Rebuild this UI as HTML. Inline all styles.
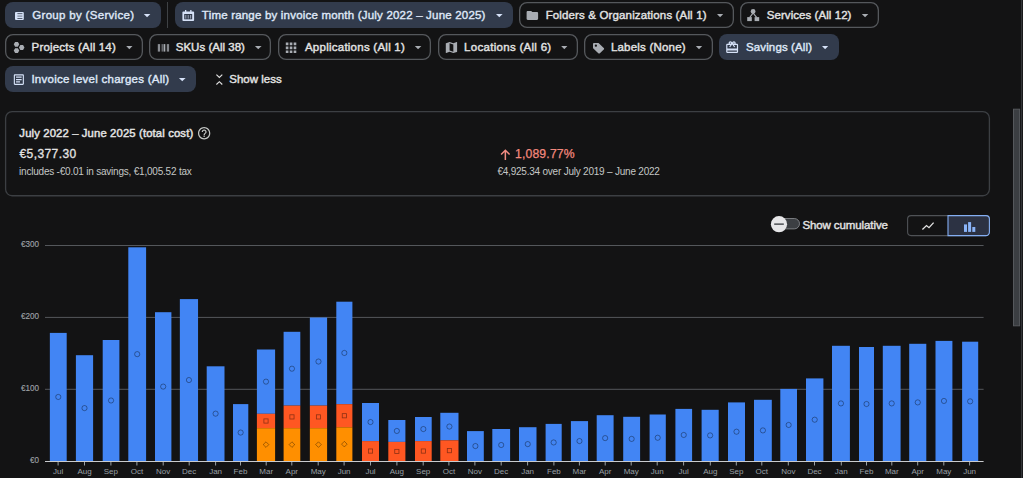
<!DOCTYPE html>
<html><head><meta charset="utf-8"><title>Billing report</title>
<style>
html,body{margin:0;padding:0;}
body{width:1023px;height:478px;overflow:hidden;background:#131314;position:relative;font-family:"Liberation Sans",sans-serif;}
.chip{position:absolute;box-sizing:border-box;height:26px;border-radius:8px;}
.f{background:#323b4c;}
.o{}
.t{position:absolute;white-space:nowrap;line-height:20px;}
svg{position:absolute;left:0;top:0;}
</style></head><body>
<div class="chip f" style="left:5px;top:2px;width:156px"></div>
<div class="chip f" style="left:175px;top:2px;width:338px"></div>
<div class="chip o" style="left:519px;top:2px;width:215px"></div>
<div class="chip o" style="left:740px;top:2px;width:139px"></div>
<div class="chip o" style="left:5px;top:34px;width:138px"></div>
<div class="chip o" style="left:149px;top:34px;width:122px"></div>
<div class="chip o" style="left:278px;top:34px;width:153px"></div>
<div class="chip o" style="left:438px;top:34px;width:140px"></div>
<div class="chip o" style="left:584px;top:34px;width:129px"></div>
<div class="chip f" style="left:719px;top:34px;width:120px"></div>
<div class="chip f" style="left:5px;top:66px;width:191px"></div>
<div style="position:absolute;left:167px;top:2px;width:1px;height:26px;background:#3f4245"></div>
<div style="position:absolute;left:5px;top:111px;width:985px;height:85px;border-radius:7px"></div>
<div class="t" style="left:32.23px;top:5.00px;font-size:11.5px;font-weight:400;color:#dfe7f7;letter-spacing:0.316px;-webkit-text-stroke:0.4px #dfe7f7">Group by (Service)</div>
<div class="t" style="left:201.86px;top:5.00px;font-size:11.5px;font-weight:400;color:#dfe7f7;letter-spacing:0.195px;-webkit-text-stroke:0.4px #dfe7f7">Time range by invoice month (July 2022 – June 2025)</div>
<div class="t" style="left:545.63px;top:5.00px;font-size:11.5px;font-weight:400;color:#e3e3e3;letter-spacing:0.143px;-webkit-text-stroke:0.4px #e3e3e3">Folders &amp; Organizations (All 1)</div>
<div class="t" style="left:766.81px;top:5.00px;font-size:11.5px;font-weight:400;color:#e3e3e3;letter-spacing:0.057px;-webkit-text-stroke:0.4px #e3e3e3">Services (All 12)</div>
<div class="t" style="left:31.53px;top:37.00px;font-size:11.5px;font-weight:400;color:#e3e3e3;letter-spacing:0.194px;-webkit-text-stroke:0.4px #e3e3e3">Projects (All 14)</div>
<div class="t" style="left:175.71px;top:37.00px;font-size:11.5px;font-weight:400;color:#e3e3e3;letter-spacing:0.019px;-webkit-text-stroke:0.4px #e3e3e3">SKUs (All 38)</div>
<div class="t" style="left:304.95px;top:37.00px;font-size:11.5px;font-weight:400;color:#e3e3e3;letter-spacing:0.246px;-webkit-text-stroke:0.4px #e3e3e3">Applications (All 1)</div>
<div class="t" style="left:464.11px;top:37.00px;font-size:11.5px;font-weight:400;color:#e3e3e3;letter-spacing:0.288px;-webkit-text-stroke:0.4px #e3e3e3">Locations (All 6)</div>
<div class="t" style="left:610.91px;top:37.00px;font-size:11.5px;font-weight:400;color:#e3e3e3;letter-spacing:0.209px;-webkit-text-stroke:0.4px #e3e3e3">Labels (None)</div>
<div class="t" style="left:746.01px;top:37.00px;font-size:11.5px;font-weight:400;color:#dfe7f7;letter-spacing:0.125px;-webkit-text-stroke:0.4px #dfe7f7">Savings (All)</div>
<div class="t" style="left:31.39px;top:69.00px;font-size:11.5px;font-weight:400;color:#dfe7f7;letter-spacing:0.259px;-webkit-text-stroke:0.4px #dfe7f7">Invoice level charges (All)</div>
<div class="t" style="left:229.21px;top:69.00px;font-size:11.5px;font-weight:400;color:#e3e3e3;letter-spacing:0.006px;-webkit-text-stroke:0.4px #e3e3e3">Show less</div>
<div class="t" style="left:19.37px;top:122.80px;font-size:11.3px;font-weight:400;color:#e3e3e3;letter-spacing:0.129px;-webkit-text-stroke:0.45px #e3e3e3">July 2022 – June 2025 (total cost)</div>
<div class="t" style="left:19.48px;top:144.00px;font-size:12px;font-weight:400;color:#e3e3e3;letter-spacing:0.413px;-webkit-text-stroke:0.3px #e3e3e3">€5,377.30</div>
<div class="t" style="left:19.06px;top:161.70px;font-size:10px;font-weight:400;color:#c4c7c5;letter-spacing:-0.212px;-webkit-text-stroke:0px #c4c7c5">includes -€0.01 in savings, €1,005.52 tax</div>
<div class="t" style="left:514.93px;top:144.00px;font-size:12.2px;font-weight:400;color:#f2887d;letter-spacing:0.179px;-webkit-text-stroke:0.25px #f2887d">1,089.77%</div>
<div class="t" style="left:497.44px;top:161.70px;font-size:10px;font-weight:400;color:#c4c7c5;letter-spacing:-0.220px;-webkit-text-stroke:0px #c4c7c5">€4,925.34 over July 2019 – June 2022</div>
<div class="t" style="left:802.41px;top:215.00px;font-size:11.5px;font-weight:400;color:#e3e3e3;letter-spacing:-0.101px;-webkit-text-stroke:0.4px #e3e3e3">Show cumulative</div>
<svg width="1023" height="478" viewBox="0 0 1023 478"><path d="M143.80 13.95L150.40 13.95L147.10 17.25Z" fill="#d6e2f8"/><path d="M496.00 13.95L502.60 13.95L499.30 17.25Z" fill="#d6e2f8"/><path d="M717.00 14.05L723.20 14.05L720.10 17.15Z" fill="#a9adb3"/><path d="M861.80 13.97L868.30 13.97L865.05 17.23Z" fill="#a9adb3"/><path d="M126.20 46.02L132.50 46.02L129.35 49.17Z" fill="#a9adb3"/><path d="M254.90 45.93L261.60 45.93L258.25 49.27Z" fill="#a9adb3"/><path d="M414.80 45.95L421.40 45.95L418.10 49.25Z" fill="#a9adb3"/><path d="M561.20 46.05L567.40 46.05L564.30 49.15Z" fill="#a9adb3"/><path d="M695.80 46.00L702.20 46.00L699.00 49.20Z" fill="#a9adb3"/><path d="M822.00 46.05L828.20 46.05L825.10 49.15Z" fill="#d6e2f8"/><path d="M178.90 77.92L185.60 77.92L182.25 81.27Z" fill="#d6e2f8"/><rect x="519.65" y="2.65" width="213.70" height="24.7" rx="7.4" fill="none" stroke="#55585c" stroke-width="1.3"/><rect x="740.65" y="2.65" width="137.70" height="24.7" rx="7.4" fill="none" stroke="#55585c" stroke-width="1.3"/><rect x="5.65" y="34.65" width="136.70" height="24.7" rx="7.4" fill="none" stroke="#55585c" stroke-width="1.3"/><rect x="149.65" y="34.65" width="120.70" height="24.7" rx="7.4" fill="none" stroke="#55585c" stroke-width="1.3"/><rect x="278.65" y="34.65" width="151.70" height="24.7" rx="7.4" fill="none" stroke="#55585c" stroke-width="1.3"/><rect x="438.65" y="34.65" width="138.70" height="24.7" rx="7.4" fill="none" stroke="#55585c" stroke-width="1.3"/><rect x="584.65" y="34.65" width="127.70" height="24.7" rx="7.4" fill="none" stroke="#55585c" stroke-width="1.3"/><rect x="15" y="11.9" width="8.8" height="8.1" rx="1" fill="#d6e2f8"/><rect x="17.4" y="13.3" width="5" height="0.8" fill="#323b4c"/><rect x="17.4" y="15.5" width="5" height="1.2" fill="#7d8698"/><rect x="17.4" y="18.1" width="5" height="0.8" fill="#323b4c"/><rect x="182.4" y="11.6" width="11.7" height="9.5" rx="1" fill="#d6e2f8"/><rect x="185" y="10" width="1.3" height="2" fill="#d6e2f8"/><rect x="190.2" y="10" width="1.3" height="2" fill="#d6e2f8"/><rect x="184.2" y="14" width="8" height="5.3" fill="#323b4c"/><rect x="185.3" y="15" width="1" height="3.6" fill="#9aa3b5"/><rect x="187.7" y="15" width="1" height="3.6" fill="#9aa3b5"/><rect x="190.1" y="15" width="1" height="3.6" fill="#9aa3b5"/><path transform="translate(525.450 8.650) scale(0.5750 0.5625)" d="M10 4H4c-1.1 0-1.99.9-1.99 2L2 18c0 1.1.9 2 2 2h16c1.1 0 2-.9 2-2V8c0-1.1-.9-2-2-2h-8l-2-2z" fill="#a9adb3"/><circle cx="753.1" cy="11.4" r="2.4" fill="#a9adb3"/><rect x="747.2" y="17.1" width="4.6" height="4" fill="#a9adb3"/><rect x="754.6" y="17.1" width="4.6" height="4" fill="#a9adb3"/><path d="M753.1 13L749.8 17.4M753.1 13L756.6 17.4" stroke="#a9adb3" stroke-width="1.2" fill="none"/><polygon points="19.25,44.30 17.88,46.68 15.12,46.68 13.75,44.30 15.12,41.92 17.88,41.92" fill="#a9adb3"/><polygon points="19.25,50.60 17.88,52.98 15.12,52.98 13.75,50.60 15.12,48.22 17.88,48.22" fill="#a9adb3"/><polygon points="24.45,47.50 23.07,49.88 20.32,49.88 18.95,47.50 20.32,45.12 23.07,45.12" fill="#a9adb3"/><rect x="157.8" y="44.1" width="2.30" height="7.5" fill="#a9adb3" opacity="0.8"/><rect x="161.5" y="44.1" width="1.70" height="7.5" fill="#a9adb3" opacity="0.55"/><rect x="163.6" y="44.1" width="1.70" height="7.5" fill="#a9adb3" opacity="1.0"/><rect x="166.8" y="44.1" width="2.30" height="7.5" fill="#a9adb3" opacity="0.75"/><path transform="translate(283.175 39.975) scale(0.6562 0.6562)" d="M4 8h4V4H4v4zm6 12h4v-4h-4v4zm-6 0h4v-4H4v4zm0-6h4v-4H4v4zm6 0h4v-4h-4v4zm6-10v4h4V4h-4zm-6 4h4V4h-4v4zm6 6h4v-4h-4v4zm0 6h4v-4h-4v4z" fill="#a9adb3"/><path transform="translate(443.917 40.150) scale(0.6278 0.6167)" d="M20.5 3l-.16.03L15 5.1 9 3 3.36 4.9c-.21.07-.36.25-.36.48V20.5c0 .28.22.5.5.5l.16-.03L9 18.9l6 2.1 5.64-1.9c.21-.07.36-.25.36-.48V3.5c0-.28-.22-.5-.5-.5zM15 19l-6-2.11V5l6 2.11V19z" fill="#a9adb3"/><path transform="translate(591.890 41.830) scale(0.5550 0.5350)" d="M21.41 11.58l-9-9C12.05 2.22 11.55 2 11 2H4c-1.1 0-2 .9-2 2v7c0 .55.22 1.05.59 1.42l9 9c.36.36.86.58 1.41.58.55 0 1.05-.22 1.41-.59l7-7c.37-.36.59-.86.59-1.41 0-.55-.23-1.06-.59-1.42z" fill="#a9adb3"/><circle cx="595.9" cy="45.7" r="1.15" fill="#131314"/><path transform="translate(725.010 39.968) scale(0.5950 0.6158)" d="M20 6h-2.18c.11-.31.18-.65.18-1 0-1.66-1.34-3-3-3-1.05 0-1.96.54-2.5 1.35l-.5.67-.5-.68C10.96 2.54 10.05 2 9 2 7.34 2 6 3.34 6 5c0 .35.07.69.18 1H4c-1.11 0-1.99.89-1.99 2L2 19c0 1.11.89 2 2 2h16c1.11 0 2-.89 2-2V8c0-1.11-.89-2-2-2zm-5-2c.55 0 1 .45 1 1s-.45 1-1 1-1-.45-1-1 .45-1 1-1zM9 4c.55 0 1 .45 1 1s-.45 1-1 1-1-.45-1-1 .45-1 1-1zm11 15H4v-2h16v2zm0-5H4V8h5.08L7 10.83 8.62 12 11 8.76l1-1.36 1 1.36L15.38 12 17 10.83 14.92 8H20v6z" fill="#d6e2f8"/><path transform="translate(12.117 72.417) scale(0.5611 0.5944)" d="M19 5v14H5V5h14m0-2H5c-1.1 0-2 .9-2 2v14c0 1.1.9 2 2 2h14c1.1 0 2-.9 2-2V5c0-1.1-.9-2-2-2z M14 17H7v-2h7v2zm3-4H7v-2h10v2zm0-4H7V7h10v2z" fill="#d6e2f8"/><path d="M216.4 74.6L219.35 77.4L222.3 74.6M216.4 84.5L219.35 81.7L222.3 84.5" fill="none" stroke="#e3e3e3" stroke-width="1.15"/><path transform="translate(196.770 125.860) scale(0.6150 0.6200)" d="M11 18h2v-2h-2v2zm1-16C6.48 2 2 6.48 2 12s4.48 10 10 10 10-4.48 10-10S17.52 2 12 2zm0 18c-4.41 0-8-3.59-8-8s3.59-8 8-8 8 3.59 8 8-3.59 8-8 8zm0-14c-2.21 0-4 1.79-4 4h2c0-1.1.9-2 2-2s2 .9 2 2c0 2-3 1.75-3 5h2c0-2.25 3-2.5 3-5 0-2.21-1.79-4-4-4z" fill="#c4c7c5"/><path d="M505.35 150.4V160.1M501.1 154.5L505.35 150.2L509.6 154.5" fill="none" stroke="#f28b82" stroke-width="1.5"/><rect x="5.6" y="111.65" width="983.8" height="84.1" rx="6.5" fill="none" stroke="#3c3f43" stroke-width="1.3"/><rect x="771.5" y="218.5" width="28" height="10.4" rx="5.2" fill="#3c3f43" stroke="#8e9196" stroke-width="0.8"/><circle cx="779" cy="224.2" r="8.1" fill="#e6e6e8"/><rect x="774.2" y="223.3" width="9.6" height="1.7" fill="#5d6064"/><rect x="907.6" y="215.6" width="81.8" height="20" rx="3.5" fill="none" stroke="#4f5256" stroke-width="1.1"/><path d="M948 215.6H985.9a3.5 3.5 0 0 1 3.5 3.5V232.1a3.5 3.5 0 0 1 -3.5 3.5H948Z" fill="#2c3243" stroke="#84aef2" stroke-width="1.1"/><path d="M922.4 229.5L926.5 225.6L929 227.7L933.6 222.6" stroke="#e3e3e3" stroke-width="1.3" fill="none"/><rect x="964" y="224.4" width="3" height="7.5" fill="#8ab4f8"/><rect x="968.1" y="222.1" width="3" height="9.8" fill="#8ab4f8"/><rect x="972.3" y="227" width="3" height="4.9" fill="#8ab4f8"/><line x1="45" y1="245.5" x2="983.6" y2="245.5" stroke="#54575b" stroke-width="1"/><line x1="45" y1="317.4" x2="983.6" y2="317.4" stroke="#54575b" stroke-width="1"/><line x1="45" y1="389.3" x2="983.6" y2="389.3" stroke="#54575b" stroke-width="1"/><rect x="49.85" y="332.9" width="16.85" height="128.10" fill="#4285f4"/><circle cx="58.28" cy="396.95" r="2.6" fill="none" stroke="rgba(0,0,0,0.45)" stroke-width="0.8"/><rect x="75.90" y="355.2" width="17.20" height="105.80" fill="#4285f4"/><circle cx="84.50" cy="408.10" r="2.6" fill="none" stroke="rgba(0,0,0,0.45)" stroke-width="0.8"/><rect x="102.70" y="340" width="16.70" height="121.00" fill="#4285f4"/><circle cx="111.05" cy="400.50" r="2.6" fill="none" stroke="rgba(0,0,0,0.45)" stroke-width="0.8"/><rect x="128.30" y="247.3" width="17.80" height="213.70" fill="#4285f4"/><circle cx="137.20" cy="354.15" r="2.6" fill="none" stroke="rgba(0,0,0,0.45)" stroke-width="0.8"/><rect x="155.00" y="312.2" width="16.40" height="148.80" fill="#4285f4"/><circle cx="163.20" cy="386.60" r="2.6" fill="none" stroke="rgba(0,0,0,0.45)" stroke-width="0.8"/><rect x="179.85" y="299.1" width="18.20" height="161.90" fill="#4285f4"/><circle cx="188.95" cy="380.05" r="2.6" fill="none" stroke="rgba(0,0,0,0.45)" stroke-width="0.8"/><rect x="206.70" y="366.3" width="17.80" height="94.70" fill="#4285f4"/><circle cx="215.60" cy="413.65" r="2.6" fill="none" stroke="rgba(0,0,0,0.45)" stroke-width="0.8"/><rect x="233.00" y="404.1" width="15.30" height="56.90" fill="#4285f4"/><circle cx="240.65" cy="432.55" r="2.6" fill="none" stroke="rgba(0,0,0,0.45)" stroke-width="0.8"/><rect x="256.90" y="349.5" width="18.20" height="64.30" fill="#4285f4"/><circle cx="266.00" cy="381.65" r="2.6" fill="none" stroke="rgba(0,0,0,0.45)" stroke-width="0.8"/><rect x="256.90" y="413.8" width="18.20" height="14.40" fill="#ff5722"/><rect x="263.90" y="418.90" width="4.2" height="4.2" fill="none" stroke="rgba(0,0,0,0.45)" stroke-width="0.8"/><rect x="256.90" y="428.2" width="18.20" height="32.80" fill="#ff8f00"/><path d="M266.00 441.80L268.80 444.60L266.00 447.40L263.20 444.60Z" fill="none" stroke="rgba(0,0,0,0.45)" stroke-width="0.8"/><rect x="283.60" y="331.8" width="16.70" height="73.80" fill="#4285f4"/><circle cx="291.95" cy="368.70" r="2.6" fill="none" stroke="rgba(0,0,0,0.45)" stroke-width="0.8"/><rect x="283.60" y="405.6" width="16.70" height="22.60" fill="#ff5722"/><rect x="289.85" y="414.80" width="4.2" height="4.2" fill="none" stroke="rgba(0,0,0,0.45)" stroke-width="0.8"/><rect x="283.60" y="428.2" width="16.70" height="32.80" fill="#ff8f00"/><path d="M291.95 441.80L294.75 444.60L291.95 447.40L289.15 444.60Z" fill="none" stroke="rgba(0,0,0,0.45)" stroke-width="0.8"/><rect x="309.85" y="317.5" width="17.25" height="88.10" fill="#4285f4"/><circle cx="318.48" cy="361.55" r="2.6" fill="none" stroke="rgba(0,0,0,0.45)" stroke-width="0.8"/><rect x="309.85" y="405.6" width="17.25" height="22.60" fill="#ff5722"/><rect x="316.38" y="414.80" width="4.2" height="4.2" fill="none" stroke="rgba(0,0,0,0.45)" stroke-width="0.8"/><rect x="309.85" y="428.2" width="17.25" height="32.80" fill="#ff8f00"/><path d="M318.48 441.80L321.28 444.60L318.48 447.40L315.68 444.60Z" fill="none" stroke="rgba(0,0,0,0.45)" stroke-width="0.8"/><rect x="336.30" y="301.7" width="16.10" height="102.50" fill="#4285f4"/><circle cx="344.35" cy="352.95" r="2.6" fill="none" stroke="rgba(0,0,0,0.45)" stroke-width="0.8"/><rect x="336.30" y="404.2" width="16.10" height="23.10" fill="#ff5722"/><rect x="342.25" y="413.65" width="4.2" height="4.2" fill="none" stroke="rgba(0,0,0,0.45)" stroke-width="0.8"/><rect x="336.30" y="427.3" width="16.10" height="33.70" fill="#ff8f00"/><path d="M344.35 441.35L347.15 444.15L344.35 446.95L341.55 444.15Z" fill="none" stroke="rgba(0,0,0,0.45)" stroke-width="0.8"/><rect x="362.00" y="403" width="17.00" height="38.10" fill="#4285f4"/><circle cx="370.50" cy="422.05" r="2.6" fill="none" stroke="rgba(0,0,0,0.45)" stroke-width="0.8"/><rect x="362.00" y="441.1" width="17.00" height="19.90" fill="#ff5722"/><rect x="368.40" y="448.95" width="4.2" height="4.2" fill="none" stroke="rgba(0,0,0,0.45)" stroke-width="0.8"/><rect x="388.30" y="420" width="17.10" height="21.90" fill="#4285f4"/><circle cx="396.85" cy="430.95" r="2.6" fill="none" stroke="rgba(0,0,0,0.45)" stroke-width="0.8"/><rect x="388.30" y="441.9" width="17.10" height="19.10" fill="#ff5722"/><rect x="394.75" y="449.35" width="4.2" height="4.2" fill="none" stroke="rgba(0,0,0,0.45)" stroke-width="0.8"/><rect x="415.00" y="417" width="16.70" height="24.10" fill="#4285f4"/><circle cx="423.35" cy="429.05" r="2.6" fill="none" stroke="rgba(0,0,0,0.45)" stroke-width="0.8"/><rect x="415.00" y="441.1" width="16.70" height="19.90" fill="#ff5722"/><rect x="421.25" y="448.95" width="4.2" height="4.2" fill="none" stroke="rgba(0,0,0,0.45)" stroke-width="0.8"/><rect x="440.30" y="412.8" width="18.20" height="27.50" fill="#4285f4"/><circle cx="449.40" cy="426.55" r="2.6" fill="none" stroke="rgba(0,0,0,0.45)" stroke-width="0.8"/><rect x="440.30" y="440.3" width="18.20" height="20.70" fill="#ff5722"/><rect x="447.30" y="448.55" width="4.2" height="4.2" fill="none" stroke="rgba(0,0,0,0.45)" stroke-width="0.8"/><rect x="467.00" y="431.1" width="16.80" height="29.90" fill="#4285f4"/><circle cx="475.40" cy="446.05" r="2.6" fill="none" stroke="rgba(0,0,0,0.45)" stroke-width="0.8"/><rect x="492.30" y="429" width="17.80" height="32.00" fill="#4285f4"/><circle cx="501.20" cy="445.00" r="2.6" fill="none" stroke="rgba(0,0,0,0.45)" stroke-width="0.8"/><rect x="519.00" y="427.2" width="17.50" height="33.80" fill="#4285f4"/><circle cx="527.75" cy="444.10" r="2.6" fill="none" stroke="rgba(0,0,0,0.45)" stroke-width="0.8"/><rect x="545.60" y="423.9" width="16.10" height="37.10" fill="#4285f4"/><circle cx="553.65" cy="442.45" r="2.6" fill="none" stroke="rgba(0,0,0,0.45)" stroke-width="0.8"/><rect x="570.90" y="421.1" width="17.15" height="39.90" fill="#4285f4"/><circle cx="579.47" cy="441.05" r="2.6" fill="none" stroke="rgba(0,0,0,0.45)" stroke-width="0.8"/><rect x="596.70" y="415.2" width="16.90" height="45.80" fill="#4285f4"/><circle cx="605.15" cy="438.10" r="2.6" fill="none" stroke="rgba(0,0,0,0.45)" stroke-width="0.8"/><rect x="623.20" y="416.8" width="16.90" height="44.20" fill="#4285f4"/><circle cx="631.65" cy="438.90" r="2.6" fill="none" stroke="rgba(0,0,0,0.45)" stroke-width="0.8"/><rect x="649.60" y="414.5" width="16.20" height="46.50" fill="#4285f4"/><circle cx="657.70" cy="437.75" r="2.6" fill="none" stroke="rgba(0,0,0,0.45)" stroke-width="0.8"/><rect x="675.40" y="408.9" width="16.70" height="52.10" fill="#4285f4"/><circle cx="683.75" cy="434.95" r="2.6" fill="none" stroke="rgba(0,0,0,0.45)" stroke-width="0.8"/><rect x="701.60" y="409.8" width="17.10" height="51.20" fill="#4285f4"/><circle cx="710.15" cy="435.40" r="2.6" fill="none" stroke="rgba(0,0,0,0.45)" stroke-width="0.8"/><rect x="728.00" y="402.4" width="17.00" height="58.60" fill="#4285f4"/><circle cx="736.50" cy="431.70" r="2.6" fill="none" stroke="rgba(0,0,0,0.45)" stroke-width="0.8"/><rect x="754.00" y="399.8" width="17.80" height="61.20" fill="#4285f4"/><circle cx="762.90" cy="430.40" r="2.6" fill="none" stroke="rgba(0,0,0,0.45)" stroke-width="0.8"/><rect x="780.30" y="388.9" width="16.70" height="72.10" fill="#4285f4"/><circle cx="788.65" cy="424.95" r="2.6" fill="none" stroke="rgba(0,0,0,0.45)" stroke-width="0.8"/><rect x="806.00" y="378.4" width="17.40" height="82.60" fill="#4285f4"/><circle cx="814.70" cy="419.70" r="2.6" fill="none" stroke="rgba(0,0,0,0.45)" stroke-width="0.8"/><rect x="832.00" y="345.8" width="17.90" height="115.20" fill="#4285f4"/><circle cx="840.95" cy="403.40" r="2.6" fill="none" stroke="rgba(0,0,0,0.45)" stroke-width="0.8"/><rect x="859.00" y="347" width="15.00" height="114.00" fill="#4285f4"/><circle cx="866.50" cy="404.00" r="2.6" fill="none" stroke="rgba(0,0,0,0.45)" stroke-width="0.8"/><rect x="882.80" y="345.8" width="17.80" height="115.20" fill="#4285f4"/><circle cx="891.70" cy="403.40" r="2.6" fill="none" stroke="rgba(0,0,0,0.45)" stroke-width="0.8"/><rect x="909.20" y="343.8" width="17.10" height="117.20" fill="#4285f4"/><circle cx="917.75" cy="402.40" r="2.6" fill="none" stroke="rgba(0,0,0,0.45)" stroke-width="0.8"/><rect x="935.50" y="340.9" width="16.90" height="120.10" fill="#4285f4"/><circle cx="943.95" cy="400.95" r="2.6" fill="none" stroke="rgba(0,0,0,0.45)" stroke-width="0.8"/><rect x="962.10" y="341.7" width="16.10" height="119.30" fill="#4285f4"/><circle cx="970.15" cy="401.35" r="2.6" fill="none" stroke="rgba(0,0,0,0.45)" stroke-width="0.8"/><line x1="45" y1="461.5" x2="983.6" y2="461.5" stroke="#c9cbce" stroke-width="1"/><line x1="58.10" y1="462" x2="58.10" y2="465.5" stroke="#9aa0a6" stroke-width="1"/><line x1="84.50" y1="462" x2="84.50" y2="465.5" stroke="#9aa0a6" stroke-width="1"/><line x1="110.90" y1="462" x2="110.90" y2="465.5" stroke="#9aa0a6" stroke-width="1"/><line x1="136.90" y1="462" x2="136.90" y2="465.5" stroke="#9aa0a6" stroke-width="1"/><line x1="163.20" y1="462" x2="163.20" y2="465.5" stroke="#9aa0a6" stroke-width="1"/><line x1="189.20" y1="462" x2="189.20" y2="465.5" stroke="#9aa0a6" stroke-width="1"/><line x1="215.60" y1="462" x2="215.60" y2="465.5" stroke="#9aa0a6" stroke-width="1"/><line x1="240.50" y1="462" x2="240.50" y2="465.5" stroke="#9aa0a6" stroke-width="1"/><line x1="266.20" y1="462" x2="266.20" y2="465.5" stroke="#9aa0a6" stroke-width="1"/><line x1="291.80" y1="462" x2="291.80" y2="465.5" stroke="#9aa0a6" stroke-width="1"/><line x1="318.20" y1="462" x2="318.20" y2="465.5" stroke="#9aa0a6" stroke-width="1"/><line x1="344.10" y1="462" x2="344.10" y2="465.5" stroke="#9aa0a6" stroke-width="1"/><line x1="370.50" y1="462" x2="370.50" y2="465.5" stroke="#9aa0a6" stroke-width="1"/><line x1="396.90" y1="462" x2="396.90" y2="465.5" stroke="#9aa0a6" stroke-width="1"/><line x1="423.20" y1="462" x2="423.20" y2="465.5" stroke="#9aa0a6" stroke-width="1"/><line x1="448.90" y1="462" x2="448.90" y2="465.5" stroke="#9aa0a6" stroke-width="1"/><line x1="474.90" y1="462" x2="474.90" y2="465.5" stroke="#9aa0a6" stroke-width="1"/><line x1="501.20" y1="462" x2="501.20" y2="465.5" stroke="#9aa0a6" stroke-width="1"/><line x1="527.60" y1="462" x2="527.60" y2="465.5" stroke="#9aa0a6" stroke-width="1"/><line x1="553.90" y1="462" x2="553.90" y2="465.5" stroke="#9aa0a6" stroke-width="1"/><line x1="579.40" y1="462" x2="579.40" y2="465.5" stroke="#9aa0a6" stroke-width="1"/><line x1="605.20" y1="462" x2="605.20" y2="465.5" stroke="#9aa0a6" stroke-width="1"/><line x1="631.20" y1="462" x2="631.20" y2="465.5" stroke="#9aa0a6" stroke-width="1"/><line x1="657.20" y1="462" x2="657.20" y2="465.5" stroke="#9aa0a6" stroke-width="1"/><line x1="683.60" y1="462" x2="683.60" y2="465.5" stroke="#9aa0a6" stroke-width="1"/><line x1="710.30" y1="462" x2="710.30" y2="465.5" stroke="#9aa0a6" stroke-width="1"/><line x1="736.30" y1="462" x2="736.30" y2="465.5" stroke="#9aa0a6" stroke-width="1"/><line x1="761.80" y1="462" x2="761.80" y2="465.5" stroke="#9aa0a6" stroke-width="1"/><line x1="788.30" y1="462" x2="788.30" y2="465.5" stroke="#9aa0a6" stroke-width="1"/><line x1="814.50" y1="462" x2="814.50" y2="465.5" stroke="#9aa0a6" stroke-width="1"/><line x1="841.30" y1="462" x2="841.30" y2="465.5" stroke="#9aa0a6" stroke-width="1"/><line x1="866.50" y1="462" x2="866.50" y2="465.5" stroke="#9aa0a6" stroke-width="1"/><line x1="891.80" y1="462" x2="891.80" y2="465.5" stroke="#9aa0a6" stroke-width="1"/><line x1="917.70" y1="462" x2="917.70" y2="465.5" stroke="#9aa0a6" stroke-width="1"/><line x1="943.80" y1="462" x2="943.80" y2="465.5" stroke="#9aa0a6" stroke-width="1"/><line x1="969.60" y1="462" x2="969.60" y2="465.5" stroke="#9aa0a6" stroke-width="1"/><text x="20.90" y="247.2" textLength="18.0" lengthAdjust="spacingAndGlyphs" font-family="Liberation Sans" font-size="8.8" fill="#9ea2a7" stroke="#9ea2a7" stroke-width="0.15">€300</text><text x="20.90" y="319.1" textLength="18.0" lengthAdjust="spacingAndGlyphs" font-family="Liberation Sans" font-size="8.8" fill="#9ea2a7" stroke="#9ea2a7" stroke-width="0.15">€200</text><text x="20.90" y="391.0" textLength="18.0" lengthAdjust="spacingAndGlyphs" font-family="Liberation Sans" font-size="8.8" fill="#9ea2a7" stroke="#9ea2a7" stroke-width="0.15">€100</text><text x="29.90" y="462.7" textLength="9.0" lengthAdjust="spacingAndGlyphs" font-family="Liberation Sans" font-size="8.8" fill="#9ea2a7" stroke="#9ea2a7" stroke-width="0.15">€0</text><text x="58.10" y="473.6" text-anchor="middle" font-family="Liberation Sans" font-size="8" fill="#9aa0a6">Jul</text><text x="84.50" y="473.6" text-anchor="middle" font-family="Liberation Sans" font-size="8" fill="#9aa0a6">Aug</text><text x="110.90" y="473.6" text-anchor="middle" font-family="Liberation Sans" font-size="8" fill="#9aa0a6">Sep</text><text x="136.90" y="473.6" text-anchor="middle" font-family="Liberation Sans" font-size="8" fill="#9aa0a6">Oct</text><text x="163.20" y="473.6" text-anchor="middle" font-family="Liberation Sans" font-size="8" fill="#9aa0a6">Nov</text><text x="189.20" y="473.6" text-anchor="middle" font-family="Liberation Sans" font-size="8" fill="#9aa0a6">Dec</text><text x="215.60" y="473.6" text-anchor="middle" font-family="Liberation Sans" font-size="8" fill="#9aa0a6">Jan</text><text x="240.50" y="473.6" text-anchor="middle" font-family="Liberation Sans" font-size="8" fill="#9aa0a6">Feb</text><text x="266.20" y="473.6" text-anchor="middle" font-family="Liberation Sans" font-size="8" fill="#9aa0a6">Mar</text><text x="291.80" y="473.6" text-anchor="middle" font-family="Liberation Sans" font-size="8" fill="#9aa0a6">Apr</text><text x="318.20" y="473.6" text-anchor="middle" font-family="Liberation Sans" font-size="8" fill="#9aa0a6">May</text><text x="344.10" y="473.6" text-anchor="middle" font-family="Liberation Sans" font-size="8" fill="#9aa0a6">Jun</text><text x="370.50" y="473.6" text-anchor="middle" font-family="Liberation Sans" font-size="8" fill="#9aa0a6">Jul</text><text x="396.90" y="473.6" text-anchor="middle" font-family="Liberation Sans" font-size="8" fill="#9aa0a6">Aug</text><text x="423.20" y="473.6" text-anchor="middle" font-family="Liberation Sans" font-size="8" fill="#9aa0a6">Sep</text><text x="448.90" y="473.6" text-anchor="middle" font-family="Liberation Sans" font-size="8" fill="#9aa0a6">Oct</text><text x="474.90" y="473.6" text-anchor="middle" font-family="Liberation Sans" font-size="8" fill="#9aa0a6">Nov</text><text x="501.20" y="473.6" text-anchor="middle" font-family="Liberation Sans" font-size="8" fill="#9aa0a6">Dec</text><text x="527.60" y="473.6" text-anchor="middle" font-family="Liberation Sans" font-size="8" fill="#9aa0a6">Jan</text><text x="553.90" y="473.6" text-anchor="middle" font-family="Liberation Sans" font-size="8" fill="#9aa0a6">Feb</text><text x="579.40" y="473.6" text-anchor="middle" font-family="Liberation Sans" font-size="8" fill="#9aa0a6">Mar</text><text x="605.20" y="473.6" text-anchor="middle" font-family="Liberation Sans" font-size="8" fill="#9aa0a6">Apr</text><text x="631.20" y="473.6" text-anchor="middle" font-family="Liberation Sans" font-size="8" fill="#9aa0a6">May</text><text x="657.20" y="473.6" text-anchor="middle" font-family="Liberation Sans" font-size="8" fill="#9aa0a6">Jun</text><text x="683.60" y="473.6" text-anchor="middle" font-family="Liberation Sans" font-size="8" fill="#9aa0a6">Jul</text><text x="710.30" y="473.6" text-anchor="middle" font-family="Liberation Sans" font-size="8" fill="#9aa0a6">Aug</text><text x="736.30" y="473.6" text-anchor="middle" font-family="Liberation Sans" font-size="8" fill="#9aa0a6">Sep</text><text x="761.80" y="473.6" text-anchor="middle" font-family="Liberation Sans" font-size="8" fill="#9aa0a6">Oct</text><text x="788.30" y="473.6" text-anchor="middle" font-family="Liberation Sans" font-size="8" fill="#9aa0a6">Nov</text><text x="814.50" y="473.6" text-anchor="middle" font-family="Liberation Sans" font-size="8" fill="#9aa0a6">Dec</text><text x="841.30" y="473.6" text-anchor="middle" font-family="Liberation Sans" font-size="8" fill="#9aa0a6">Jan</text><text x="866.50" y="473.6" text-anchor="middle" font-family="Liberation Sans" font-size="8" fill="#9aa0a6">Feb</text><text x="891.80" y="473.6" text-anchor="middle" font-family="Liberation Sans" font-size="8" fill="#9aa0a6">Mar</text><text x="917.70" y="473.6" text-anchor="middle" font-family="Liberation Sans" font-size="8" fill="#9aa0a6">Apr</text><text x="943.80" y="473.6" text-anchor="middle" font-family="Liberation Sans" font-size="8" fill="#9aa0a6">May</text><text x="969.60" y="473.6" text-anchor="middle" font-family="Liberation Sans" font-size="8" fill="#9aa0a6">Jun</text><rect x="1013.5" y="109.2" width="6.1" height="216.6" fill="#3b3e42" stroke="#55585c" stroke-width="1"/><rect x="1021" y="0" width="1.2" height="478" fill="#323437"/></svg>
</body></html>
